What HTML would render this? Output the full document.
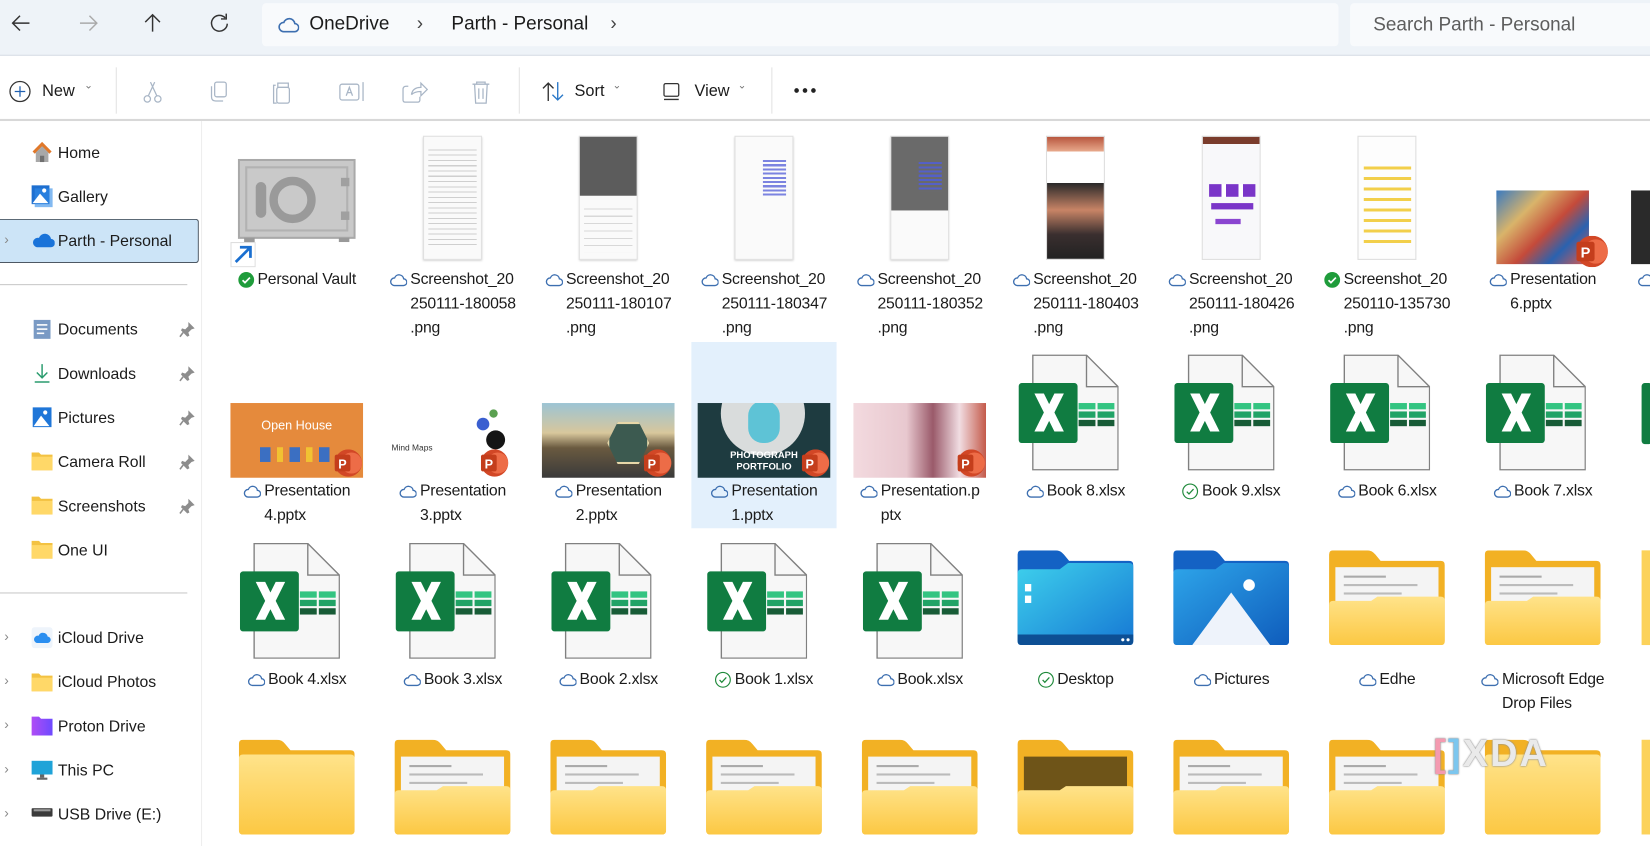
<!DOCTYPE html>
<html><head><meta charset="utf-8">
<style>
*{margin:0;padding:0;box-sizing:border-box}
html,body{width:1650px;height:846px;overflow:hidden;background:#fff}
#w{position:absolute;left:0;top:0;width:1568px;height:804px;transform:scale(1.05230);transform-origin:0 0;font-family:"Liberation Sans",sans-serif;color:#1b1b1b;background:#fff;overflow:hidden}
.a{position:absolute}
.top{left:0;top:0;width:1568px;height:53px;background:#eef3f8;border-bottom:1px solid #d6dde6}
.addr{left:249px;top:3px;width:1023px;height:41px;background:#f8fafc;border-radius:4px}
.srch{left:1283px;top:3px;width:290px;height:41px;background:#f8fafc;border-radius:4px}
.t18{font-size:18px;line-height:22px}
.tb{font-size:15.5px;line-height:20px}
.sep{width:1px;height:44px;background:#e3e3e3;top:64px}
.sb{font-size:15px;line-height:20px;left:55px}
.lb{position:absolute;width:140px;display:flex;justify-content:center;font-size:15px;line-height:23px;color:#1b1b1b;letter-spacing:-0.2px}
.lb svg{flex:none;margin-top:4px;margin-right:3px}
.lb div{white-space:nowrap}
.chev{left:4px;font-size:13px;color:#888}
</style></head><body>
<div id="w">
<svg width="0" height="0" style="position:absolute">
<defs>
<symbol id="cl" viewBox="0 0 16 14"><path d="M4.5 12.5H12.5a3 3 0 0 0 .3-6 4.2 4.2 0 0 0-8.1-.8A3.4 3.4 0 0 0 4.5 12.5Z" fill="none" stroke="#3d6fb0" stroke-width="1.2"/></symbol>
<symbol id="ck" viewBox="0 0 16 16"><circle cx="8" cy="8" r="7.5" fill="#1f9c3b"/><path d="M4.5 8.3l2.3 2.3 4.7-4.8" fill="none" stroke="#fff" stroke-width="1.6"/></symbol>
<symbol id="co" viewBox="0 0 16 16"><circle cx="8" cy="8" r="7" fill="none" stroke="#1f8a3b" stroke-width="1.1"/><path d="M4.8 8.2l2.1 2.2 4.3-4.6" fill="none" stroke="#1f8a3b" stroke-width="1.2"/></symbol>
<symbol id="xl" viewBox="0 0 95 110"><path d="M13.5 .5H64.5L94.5 30.5V109.5H13.5Z" fill="#f7f7f7" stroke="#808080" stroke-width="1.3"/><path d="M64.5 .5V30.5H94.5" fill="none" stroke="#808080" stroke-width="1.3"/><rect x="57" y="46" width="16" height="6" fill="#33c481"/><rect x="75" y="46" width="16" height="6" fill="#33c481"/><rect x="57" y="54" width="16" height="6" fill="#21a366"/><rect x="75" y="54" width="16" height="6" fill="#21a366"/><rect x="57" y="62" width="16" height="6" fill="#185c37"/><rect x="75" y="62" width="16" height="6" fill="#185c37"/><rect x="0" y="27" width="56" height="57" rx="3" fill="#107c41"/><path d="M15 37h9l5 10 5-10h9l-9 18 9 18h-9l-5-10-5 10h-9l9-18z" fill="#fff"/></symbol>
<linearGradient id="yf" x1="0" y1="0" x2="0" y2="1"><stop offset="0" stop-color="#ffe38a"/><stop offset="1" stop-color="#fcc843"/></linearGradient>
<symbol id="fd" viewBox="0 0 110 90"><path d="M4 0H36Q41 0 44 4L49 10H106Q110 10 110 14V86Q110 90 106 90H4Q0 90 0 86V4Q0 0 4 0Z" fill="#f2b124"/><path d="M0 18Q0 14 4 14H106Q110 14 110 18V86Q110 90 106 90H4Q0 90 0 86Z" fill="url(#yf)"/></symbol>
<symbol id="fc" viewBox="0 0 110 90"><path d="M4 0H36Q41 0 44 4L49 10H106Q110 10 110 14V86Q110 90 106 90H4Q0 90 0 86V4Q0 0 4 0Z" fill="#f2b124"/><rect x="6" y="16" width="98" height="50" fill="#f4f4f4"/><rect x="14" y="24" width="40" height="2" fill="#aaa"/><rect x="14" y="32" width="70" height="2" fill="#bbb"/><rect x="14" y="40" width="55" height="2" fill="#bbb"/><path d="M0 52Q0 48 4 48H40L46 44H106Q110 44 110 48V86Q110 90 106 90H4Q0 90 0 86Z" fill="url(#yf)"/></symbol>
<symbol id="pp" viewBox="0 0 26 26"><circle cx="13" cy="13" r="13" fill="#d24726"/><circle cx="16" cy="13" r="10" fill="#ed6c47"/><rect x="0" y="5" width="15" height="16" rx="2" fill="#c43e1c"/><text x="7.5" y="18" font-size="12" font-family="Liberation Sans" font-weight="bold" fill="#fff" text-anchor="middle">P</text></symbol>
</defs>
</svg>

<div class="a top"></div>
<svg class="a" style="left:10px;top:11px" width="220" height="22" viewBox="0 0 220 22" fill="none" stroke="#333" stroke-width="1.4">
<path d="M18 11H2M9 4 2 11l7 7"/>
<path d="M66 11h16M75 4l7 7-7 7" stroke="#aaa"/>
<path d="M135 19V3M128 10l7-7 7 7"/>
<path d="M204 6a7.5 7.5 0 1 0 2 5.5M205 2v5h-5"/>
</svg>
<div class="a addr"></div>
<svg class="a" style="left:263px;top:14px" width="22" height="18" viewBox="0 0 16 14"><use href="#cl"/></svg>
<div class="a t18" style="left:294px;top:11px">OneDrive</div>
<div class="a t18" style="left:396px;top:11px;color:#444">›</div>
<div class="a t18" style="left:429px;top:11px">Parth - Personal</div>
<div class="a t18" style="left:580px;top:11px;color:#444">›</div>
<div class="a srch"></div>
<div class="a t18" style="left:1305px;top:12px;color:#5d5d5d">Search Parth - Personal</div>

<svg class="a" style="left:8px;top:76px" width="22" height="22" viewBox="0 0 22 22" fill="none" stroke="#333" stroke-width="1.2"><circle cx="11" cy="11" r="9.5"/><path d="M11 6v10M6 11h10" stroke="#2060b0"/></svg>
<div class="a tb" style="left:40px;top:77px">New</div>
<div class="a" style="left:80px;top:76px;font-size:10px;color:#777">⌄</div>
<div class="a sep" style="left:110px"></div>
<svg class="a" style="left:130px;top:74px" width="350" height="26" viewBox="0 0 350 26" fill="none" stroke="#a9b6c6" stroke-width="1.2">
<circle cx="10" cy="20" r="3"/><circle cx="20" cy="20" r="3"/><path d="M11 17 17 4M19 17 13 4"/>
<rect x="74" y="4" width="11" height="14" rx="2"/><path d="M71 8v10q0 4 4 4h7"/>
<rect x="133" y="9" width="12" height="15" rx="2"/><path d="M134 5h10v4h-10zM132 7h-2v17h3"/>
<rect x="193" y="6" width="18" height="15" rx="2"/><path d="M199 17l3-8 3 8M200 14h4M215 4v18"/>
<path d="M258 8h-2q-3 0-3 3v10q0 2 2 2h12q2 0 2-2v-3M261 16q1-7 9-7V5l6 6-6 6v-4q-6 0-9 3"/>
<path d="M319 6h16M323 6V4h8v2M321 6l1 18h10l1-18M325 10v10M329 10v10"/>
</svg>
<div class="a sep" style="left:493px"></div>
<svg class="a" style="left:514px;top:76px" width="24" height="22" viewBox="0 0 24 22" fill="none" stroke-width="1.3"><path d="M7 20V3M2 8l5-5 5 5" stroke="#333"/><path d="M16 2v17M11 14l5 5 5-5" stroke="#2a78c8"/></svg>
<div class="a tb" style="left:546px;top:77px">Sort</div>
<div class="a" style="left:582px;top:76px;font-size:10px;color:#777">⌄</div>
<svg class="a" style="left:629px;top:78px" width="20" height="18" viewBox="0 0 20 18" fill="none" stroke="#333" stroke-width="1.2"><rect x="2" y="1.5" width="14" height="12" rx="1.5"/><path d="M2 16.5h14"/></svg>
<div class="a tb" style="left:660px;top:77px">View</div>
<div class="a" style="left:701px;top:76px;font-size:10px;color:#777">⌄</div>
<div class="a sep" style="left:733px"></div>
<svg class="a" style="left:753px;top:82px" width="24" height="8"><circle cx="4" cy="4" r="2.2" fill="#222"/><circle cx="12" cy="4" r="2.2" fill="#222"/><circle cx="20" cy="4" r="2.2" fill="#222"/></svg>
<div class="a" style="left:0;top:113px;width:1568px;height:2px;background:#d8d8d8"></div>

<div class="a" style="left:191px;top:115px;width:1px;height:689px;background:#eeeeee"></div>
<svg class="a" style="left:29px;top:134px" width="22" height="22" viewBox="0 0 22 22"><path d="M3 11 11 3l8 8" fill="none" stroke="#e0782a" stroke-width="3"/><path d="M5 11v9h12v-9l-6-6z" fill="#a8a8a8"/><rect x="9" y="14" width="4" height="6" fill="#707070"/></svg>
<div class="a sb" style="top:136px">Home</div>
<svg class="a" style="left:30px;top:176px" width="21" height="21" viewBox="0 0 21 21"><rect x="0" y="0" width="17" height="18" fill="#1e6fd0"/><rect x="3" y="3" width="17" height="18" fill="#2f8be8" opacity=".6"/><path d="M1 17 8 8l8 9z" fill="#fff"/><circle cx="12" cy="5" r="2" fill="#fff"/></svg>
<div class="a sb" style="top:178px">Gallery</div>
<div class="a" style="left:0;top:208px;width:189px;height:42px;background:#cce4f7;border:1px solid #4d5864;border-left:none;border-radius:0 3px 3px 0"></div>
<div class="a chev" style="top:220px">›</div>
<svg class="a" style="left:30px;top:221px" width="22" height="15" viewBox="0 0 22 15"><path d="M5 14h13a4 4 0 0 0 .5-8 6 6 0 0 0-11.5-1A4.5 4.5 0 0 0 5 14Z" fill="#1a73d9"/></svg>
<div class="a sb" style="top:220px">Parth - Personal</div>
<div class="a" style="left:0;top:270px;width:178px;height:1px;background:#c8c8c8"></div>
<svg class="a" style="left:31px;top:303px" width="18" height="20" viewBox="0 0 18 20"><rect x="1" y="1" width="16" height="18" fill="#7a9ac4"/><rect x="4" y="5" width="10" height="1.5" fill="#fff"/><rect x="4" y="9" width="10" height="1.5" fill="#fff"/><rect x="4" y="13" width="7" height="1.5" fill="#fff"/></svg>
<div class="a sb" style="top:304px">Documents</div>
<svg class="a" style="left:31px;top:345px" width="18" height="20" viewBox="0 0 18 20" fill="none" stroke="#2a9c6e" stroke-width="1.4"><path d="M9 1v13M4 9l5 5 5-5M2 18h14"/></svg>
<div class="a sb" style="top:346px">Downloads</div>
<svg class="a" style="left:31px;top:387px" width="18" height="19" viewBox="0 0 18 19"><rect width="18" height="19" fill="#1f76d8"/><path d="M1 18 8 8l8 10z" fill="#fff"/><circle cx="12" cy="5" r="2" fill="#fff"/></svg>
<div class="a sb" style="top:388px">Pictures</div>
<svg class="a" style="left:30px;top:429px" width="20" height="18" viewBox="0 0 20 18"><path d="M0 1h7l2 2h11v15H0z" fill="#f3c242"/><rect y="5" width="20" height="13" fill="#ffd868"/></svg>
<div class="a sb" style="top:430px">Camera Roll</div>
<svg class="a" style="left:30px;top:471px" width="20" height="18" viewBox="0 0 20 18"><path d="M0 1h7l2 2h11v15H0z" fill="#f3c242"/><rect y="5" width="20" height="13" fill="#ffd868"/></svg>
<div class="a sb" style="top:472px">Screenshots</div>
<svg class="a" style="left:30px;top:513px" width="20" height="18" viewBox="0 0 20 18"><path d="M0 1h7l2 2h11v15H0z" fill="#f3c242"/><rect y="5" width="20" height="13" fill="#ffd868"/></svg>
<div class="a sb" style="top:514px">One UI</div>
<svg class="a" style="left:170px;top:305px" width="16" height="190" viewBox="0 0 16 190" fill="#8d8d8d"><g id="pn"><path d="M9 1l6 6-3 1-3 3 1 3-2 1-6-6 1-2 3 1 3-3z"/><path d="M4 11l-3 4" stroke="#8d8d8d" stroke-width="1.5"/></g><use href="#pn" y="42"/><use href="#pn" y="84"/><use href="#pn" y="126"/><use href="#pn" y="168"/></svg>
<div class="a" style="left:0;top:563px;width:178px;height:1px;background:#c8c8c8"></div>
<div class="a chev" style="top:597px">›</div>
<svg class="a" style="left:30px;top:596px" width="20" height="20" viewBox="0 0 20 20"><rect width="20" height="20" rx="3" fill="#eef4fb"/><path d="M5 15h10a3 3 0 0 0 .3-6 4.5 4.5 0 0 0-8.6-.8A3.4 3.4 0 0 0 5 15Z" fill="#2a8ef0"/></svg>
<div class="a sb" style="top:597px">iCloud Drive</div>
<div class="a chev" style="top:639px">›</div>
<svg class="a" style="left:30px;top:639px" width="20" height="18" viewBox="0 0 20 18"><path d="M0 1h7l2 2h11v15H0z" fill="#f3c242"/><rect y="5" width="20" height="13" fill="#ffd868"/></svg>
<div class="a sb" style="top:639px">iCloud Photos</div>
<div class="a chev" style="top:681px">›</div>
<svg class="a" style="left:30px;top:680px" width="20" height="19" viewBox="0 0 20 19"><defs><linearGradient id="pr" x1="0" x2="1"><stop offset="0" stop-color="#b04cf5"/><stop offset="1" stop-color="#6d4aff"/></linearGradient></defs><path d="M0 1h7l2 2h11v16H0z" fill="url(#pr)"/></svg>
<div class="a sb" style="top:681px">Proton Drive</div>
<div class="a chev" style="top:723px">›</div>
<svg class="a" style="left:30px;top:722px" width="20" height="20" viewBox="0 0 20 20"><rect x="0" y="1" width="20" height="13" fill="#1fa3d8"/><rect x="8" y="14" width="4" height="3" fill="#666"/><rect x="5" y="17" width="10" height="2" fill="#666"/></svg>
<div class="a sb" style="top:723px">This PC</div>
<div class="a chev" style="top:765px">›</div>
<svg class="a" style="left:30px;top:768px" width="20" height="10" viewBox="0 0 20 10"><rect width="20" height="8" rx="1" fill="#3a3a3a"/><rect x="2" y="1" width="16" height="2" fill="#999"/></svg>
<div class="a sb" style="top:765px">USB Drive (E:)</div>

<div class="a" style="left:657px;top:325px;width:138px;height:177px;background:#e3f0fc"></div>

<svg class="a" style="left:226px;top:151px" width="112" height="80" viewBox="0 0 112 80"><rect x="1" y="1" width="110" height="74" fill="#c9c9c9" stroke="#a9a9a9" stroke-width="2"/><rect x="8" y="8" width="96" height="60" fill="none" stroke="#b2b2b2" stroke-width="2"/><rect x="98" y="18" width="8" height="8" fill="#a0a0a0"/><rect x="98" y="50" width="8" height="8" fill="#a0a0a0"/><rect x="17" y="22" width="10" height="34" rx="5" fill="#9a9a9a"/><circle cx="52" cy="39" r="18" fill="none" stroke="#9a9a9a" stroke-width="8"/><rect x="6" y="75" width="10" height="4" fill="#999"/><rect x="96" y="75" width="10" height="4" fill="#999"/></svg>
<svg class="a" style="left:219px;top:230px" width="24" height="24" viewBox="0 0 24 24"><rect x=".5" y=".5" width="23" height="23" fill="#fff" stroke="#ddd"/><path d="M5 19 18 6M9 5h10v10" fill="none" stroke="#1a6fd0" stroke-width="2.6"/></svg>
<div class="lb" style="left:212px;top:254px"><svg width="16" height="16"><use href="#ck"/></svg><div>Personal Vault</div></div>

<div class="a" style="left:402px;top:129px;width:56px;height:118px;background:#fafafa;border:1px solid #e0e0e0;box-shadow:0 1px 2px #ccc"><div style="margin:8px 4px;height:95px;background:repeating-linear-gradient(#fafafa 0 4px,#cfcfcf 4px 5px)"></div></div>
<div class="a" style="left:550px;top:129px;width:56px;height:118px;background:#fafafa;border:1px solid #e0e0e0;box-shadow:0 1px 2px #ccc"><div style="height:56px;background:#5c5c5c"></div><div style="margin:6px 4px;height:48px;background:repeating-linear-gradient(#fafafa 0 6px,#d8d8d8 6px 7px)"></div></div>
<div class="a" style="left:698px;top:129px;width:56px;height:118px;background:#fafafa;border:1px solid #e0e0e0;box-shadow:0 1px 2px #ccc"><div style="margin:22px 6px 0 26px;height:35px;background:repeating-linear-gradient(#7b83e0 0 2px,#fafafa 2px 4px)"></div></div>
<div class="a" style="left:846px;top:129px;width:56px;height:118px;background:#fafafa;border:1px solid #e0e0e0;box-shadow:0 1px 2px #ccc"><div style="height:70px;background:#6a6a6a"><div style="margin:0 6px 0 26px;position:relative;top:24px;height:28px;background:repeating-linear-gradient(#5460c8 0 2px,#6a6a6a 2px 4px)"></div></div></div>
<div class="a" style="left:994px;top:129px;width:56px;height:118px;background:linear-gradient(#b8563e 0,#e8a98c 12%,#fff 12%,#fff 38%,#2a2a2a 38%,#c88466 60%,#3a2f2f 80%,#222 100%);border:1px solid #ddd"></div>
<div class="a" style="left:1142px;top:129px;width:56px;height:118px;background:linear-gradient(#7a3c2c 0,#7a3c2c 6%,#f8f8fa 6%);border:1px solid #ddd"><div style="position:absolute;left:6px;top:45px;width:44px;height:12px;background:repeating-linear-gradient(90deg,#7a35c8 0 12px,#fff 12px 16px)"></div><div style="position:absolute;left:8px;top:63px;width:40px;height:6px;background:#7a35c8"></div><div style="position:absolute;left:12px;top:78px;width:24px;height:5px;background:#8a45d0"></div></div>
<div class="a" style="left:1290px;top:129px;width:56px;height:118px;background:#fdfdfd;border:1px solid #ddd"><div style="margin:24px 4px 0 5px;height:80px;background:repeating-linear-gradient(#fdfdfd 0 4px,#f2cf4a 4px 7px,#fdfdfd 7px 10px)"></div></div>
<div class="a" style="left:1422px;top:181px;width:88px;height:70px;background:linear-gradient(135deg,#3a7ac0,#d9b46a 30%,#c44a3a 55%,#2a62b0 75%,#e25a4a)"></div>
<svg class="a" style="left:1498px;top:224px" width="30" height="30"><use href="#pp" width="30" height="30"/></svg>
<div class="a" style="left:1550px;top:181px;width:18px;height:70px;background:#2a2a2a"></div>

<div class="lb" style="left:360px;top:254px"><svg width="17" height="15"><use href="#cl"/></svg><div>Screenshot_20<br>250111-180058<br>.png</div></div>
<div class="lb" style="left:508px;top:254px"><svg width="17" height="15"><use href="#cl"/></svg><div>Screenshot_20<br>250111-180107<br>.png</div></div>
<div class="lb" style="left:656px;top:254px"><svg width="17" height="15"><use href="#cl"/></svg><div>Screenshot_20<br>250111-180347<br>.png</div></div>
<div class="lb" style="left:804px;top:254px"><svg width="17" height="15"><use href="#cl"/></svg><div>Screenshot_20<br>250111-180352<br>.png</div></div>
<div class="lb" style="left:952px;top:254px"><svg width="17" height="15"><use href="#cl"/></svg><div>Screenshot_20<br>250111-180403<br>.png</div></div>
<div class="lb" style="left:1100px;top:254px"><svg width="17" height="15"><use href="#cl"/></svg><div>Screenshot_20<br>250111-180426<br>.png</div></div>
<div class="lb" style="left:1248px;top:254px"><svg width="16" height="16"><use href="#ck"/></svg><div>Screenshot_20<br>250110-135730<br>.png</div></div>
<div class="lb" style="left:1396px;top:254px"><svg width="17" height="15"><use href="#cl"/></svg><div>Presentation<br>6.pptx</div></div>
<svg class="a" style="left:1556px;top:258px" width="17" height="15"><use href="#cl"/></svg>

<div class="a" style="left:219px;top:383px;width:126px;height:71px;background:#e58a3c;color:#fff;font-size:12px;text-align:center;padding-top:14px">Open House<div style="margin:14px auto 0;width:70px;height:14px;background:repeating-linear-gradient(90deg,#3b6fc2 0 10px,#e58a3c 10px 16px,#f1c232 16px 22px,#e58a3c 22px 28px)"></div></div>
<div class="a" style="left:367px;top:383px;width:126px;height:71px;background:#fff;font-size:8px;padding:38px 0 0 5px;color:#333">Mind Maps<div style="position:absolute;left:86px;top:14px;width:12px;height:12px;border-radius:6px;background:#3a5fd0"></div><div style="position:absolute;left:98px;top:6px;width:8px;height:8px;border-radius:4px;background:#5aa050"></div><div style="position:absolute;left:95px;top:26px;width:18px;height:18px;border-radius:9px;background:#151515"></div></div>
<div class="a" style="left:515px;top:383px;width:126px;height:71px;background:linear-gradient(#9cc4d4 0,#d8c79c 40%,#6a5a40 60%,#3a3a3a 100%)"><div style="position:absolute;left:62px;top:18px;width:40px;height:40px;background:#3c5a50;border:2px solid #e7d7a8;clip-path:polygon(25% 0,75% 0,100% 50%,75% 100%,25% 100%,0 50%)"></div></div>
<div class="a" style="left:663px;top:383px;width:126px;height:71px;background:#1e3b40;overflow:hidden"><div style="position:absolute;left:22px;top:-30px;width:80px;height:80px;border-radius:40px;background:#d9dcdc"></div><div style="position:absolute;left:48px;top:-2px;width:30px;height:40px;border-radius:14px;background:#5ec3d6"></div><div style="position:absolute;left:0;width:126px;top:44px;color:#fff;font-size:9px;font-weight:bold;text-align:center;line-height:11px">PHOTOGRAPH<br>PORTFOLIO</div></div>
<div class="a" style="left:811px;top:383px;width:126px;height:71px;background:linear-gradient(90deg,#f3dadf,#e8c8cf 40%,#9a5a6a 60%,#f1dde2 80%,#c45a4a)"></div>
<svg class="a" style="left:318px;top:427px" width="26" height="26"><use href="#pp"/></svg>
<svg class="a" style="left:457px;top:427px" width="26" height="26"><use href="#pp"/></svg>
<svg class="a" style="left:612px;top:427px" width="26" height="26"><use href="#pp"/></svg>
<svg class="a" style="left:762px;top:427px" width="26" height="26"><use href="#pp"/></svg>
<svg class="a" style="left:910px;top:427px" width="26" height="26"><use href="#pp"/></svg>
<svg class="a" style="left:968px;top:337px" width="95" height="110"><use href="#xl"/></svg>
<svg class="a" style="left:1116px;top:337px" width="95" height="110"><use href="#xl"/></svg>
<svg class="a" style="left:1264px;top:337px" width="95" height="110"><use href="#xl"/></svg>
<svg class="a" style="left:1412px;top:337px" width="95" height="110"><use href="#xl"/></svg>
<div class="a" style="left:1560px;top:364px;width:10px;height:58px;background:#107c41;border-radius:3px"></div>

<div class="lb" style="left:212px;top:455px"><svg width="17" height="15"><use href="#cl"/></svg><div>Presentation<br>4.pptx</div></div>
<div class="lb" style="left:360px;top:455px"><svg width="17" height="15"><use href="#cl"/></svg><div>Presentation<br>3.pptx</div></div>
<div class="lb" style="left:508px;top:455px"><svg width="17" height="15"><use href="#cl"/></svg><div>Presentation<br>2.pptx</div></div>
<div class="lb" style="left:656px;top:455px"><svg width="17" height="15"><use href="#cl"/></svg><div>Presentation<br>1.pptx</div></div>
<div class="lb" style="left:804px;top:455px"><svg width="17" height="15"><use href="#cl"/></svg><div>Presentation.p<br>ptx</div></div>
<div class="lb" style="left:952px;top:455px"><svg width="17" height="15"><use href="#cl"/></svg><div>Book 8.xlsx</div></div>
<div class="lb" style="left:1100px;top:455px"><svg width="16" height="16"><use href="#co"/></svg><div>Book 9.xlsx</div></div>
<div class="lb" style="left:1248px;top:455px"><svg width="17" height="15"><use href="#cl"/></svg><div>Book 6.xlsx</div></div>
<div class="lb" style="left:1396px;top:455px"><svg width="17" height="15"><use href="#cl"/></svg><div>Book 7.xlsx</div></div>

<svg class="a" style="left:228px;top:516px" width="95" height="110"><use href="#xl"/></svg>
<svg class="a" style="left:376px;top:516px" width="95" height="110"><use href="#xl"/></svg>
<svg class="a" style="left:524px;top:516px" width="95" height="110"><use href="#xl"/></svg>
<svg class="a" style="left:672px;top:516px" width="95" height="110"><use href="#xl"/></svg>
<svg class="a" style="left:820px;top:516px" width="95" height="110"><use href="#xl"/></svg>
<svg class="a" style="left:967px;top:523px" width="110" height="90" viewBox="0 0 110 90"><defs><linearGradient id="bd" x1="0" y1="0" x2="1" y2="1"><stop offset="0" stop-color="#3ed0ec"/><stop offset="1" stop-color="#1678d4"/></linearGradient></defs><path d="M4 0H36Q41 0 44 4L49 10H106Q110 10 110 14V86Q110 90 106 90H4Q0 90 0 86V4Q0 0 4 0Z" fill="#1462c4"/><path d="M0 22Q0 18 4 18H40L48 12H106Q110 12 110 16V86Q110 90 106 90H4Q0 90 0 86Z" fill="url(#bd)"/><path d="M0 80H110V86Q110 90 106 90H4Q0 90 0 86Z" fill="#0d4f94"/><rect x="7" y="32" width="6" height="7" fill="#fff"/><rect x="7" y="43" width="6" height="7" fill="#fff"/><circle cx="100" cy="85" r="1.5" fill="#fff"/><circle cx="105" cy="85" r="1.5" fill="#fff"/></svg>
<svg class="a" style="left:1115px;top:523px" width="110" height="90" viewBox="0 0 110 90"><defs><linearGradient id="bp" x1="0" y1="0" x2="1" y2="1"><stop offset="0" stop-color="#2ea6ea"/><stop offset="1" stop-color="#0f5cbc"/></linearGradient></defs><path d="M4 0H36Q41 0 44 4L49 10H106Q110 10 110 14V86Q110 90 106 90H4Q0 90 0 86V4Q0 0 4 0Z" fill="#1462c4"/><path d="M0 22Q0 18 4 18H40L48 12H106Q110 12 110 16V86Q110 90 106 90H4Q0 90 0 86Z" fill="url(#bp)"/><path d="M18 90 55 40 92 90Z" fill="#eef3fb"/><circle cx="72" cy="33" r="5.5" fill="#fff"/></svg>
<svg class="a" style="left:1263px;top:523px" width="110" height="90"><use href="#fc"/></svg>
<svg class="a" style="left:1411px;top:523px" width="110" height="90" viewBox="0 0 110 90"><use href="#fc"/></svg>
<div class="a" style="left:1560px;top:523px;width:10px;height:90px;background:#fcd25a"></div>

<div class="lb" style="left:212px;top:634px"><svg width="17" height="15"><use href="#cl"/></svg><div>Book 4.xlsx</div></div>
<div class="lb" style="left:360px;top:634px"><svg width="17" height="15"><use href="#cl"/></svg><div>Book 3.xlsx</div></div>
<div class="lb" style="left:508px;top:634px"><svg width="17" height="15"><use href="#cl"/></svg><div>Book 2.xlsx</div></div>
<div class="lb" style="left:656px;top:634px"><svg width="16" height="16"><use href="#co"/></svg><div>Book 1.xlsx</div></div>
<div class="lb" style="left:804px;top:634px"><svg width="17" height="15"><use href="#cl"/></svg><div>Book.xlsx</div></div>
<div class="lb" style="left:952px;top:634px"><svg width="16" height="16"><use href="#co"/></svg><div>Desktop</div></div>
<div class="lb" style="left:1100px;top:634px"><svg width="17" height="15"><use href="#cl"/></svg><div>Pictures</div></div>
<div class="lb" style="left:1248px;top:634px"><svg width="17" height="15"><use href="#cl"/></svg><div>Edhe</div></div>
<div class="lb" style="left:1396px;top:634px"><svg width="17" height="15"><use href="#cl"/></svg><div>Microsoft Edge<br>Drop Files</div></div>

<svg class="a" style="left:227px;top:703px" width="110" height="90"><use href="#fd"/></svg>
<svg class="a" style="left:375px;top:703px" width="110" height="90"><use href="#fc"/></svg>
<svg class="a" style="left:523px;top:703px" width="110" height="90"><use href="#fc"/></svg>
<svg class="a" style="left:671px;top:703px" width="110" height="90"><use href="#fc"/></svg>
<svg class="a" style="left:819px;top:703px" width="110" height="90"><use href="#fc"/></svg>
<svg class="a" style="left:967px;top:703px" width="110" height="90" viewBox="0 0 110 90"><path d="M4 0H36Q41 0 44 4L49 10H106Q110 10 110 14V86Q110 90 106 90H4Q0 90 0 86V4Q0 0 4 0Z" fill="#f2b124"/><rect x="6" y="16" width="98" height="50" fill="#6e5418"/><path d="M0 52Q0 48 4 48H40L46 44H106Q110 44 110 48V86Q110 90 106 90H4Q0 90 0 86Z" fill="url(#yf)"/></svg>
<svg class="a" style="left:1115px;top:703px" width="110" height="90"><use href="#fc"/></svg>
<svg class="a" style="left:1263px;top:703px" width="110" height="90"><use href="#fc"/></svg>
<svg class="a" style="left:1411px;top:703px" width="110" height="90"><use href="#fd"/></svg>
<div class="a" style="left:1560px;top:703px;width:10px;height:90px;background:#fcd25a"></div>

<div class="a" style="left:1362px;top:696px;font-size:36px;font-weight:bold;letter-spacing:2px;color:rgba(255,255,255,.8);text-shadow:0 0 2px #999,0 0 1px #777;line-height:40px"><span style="color:#f49ab0">[</span><span style="color:#7cc6ee">]</span>XDA</div>
</div>
</body></html>
